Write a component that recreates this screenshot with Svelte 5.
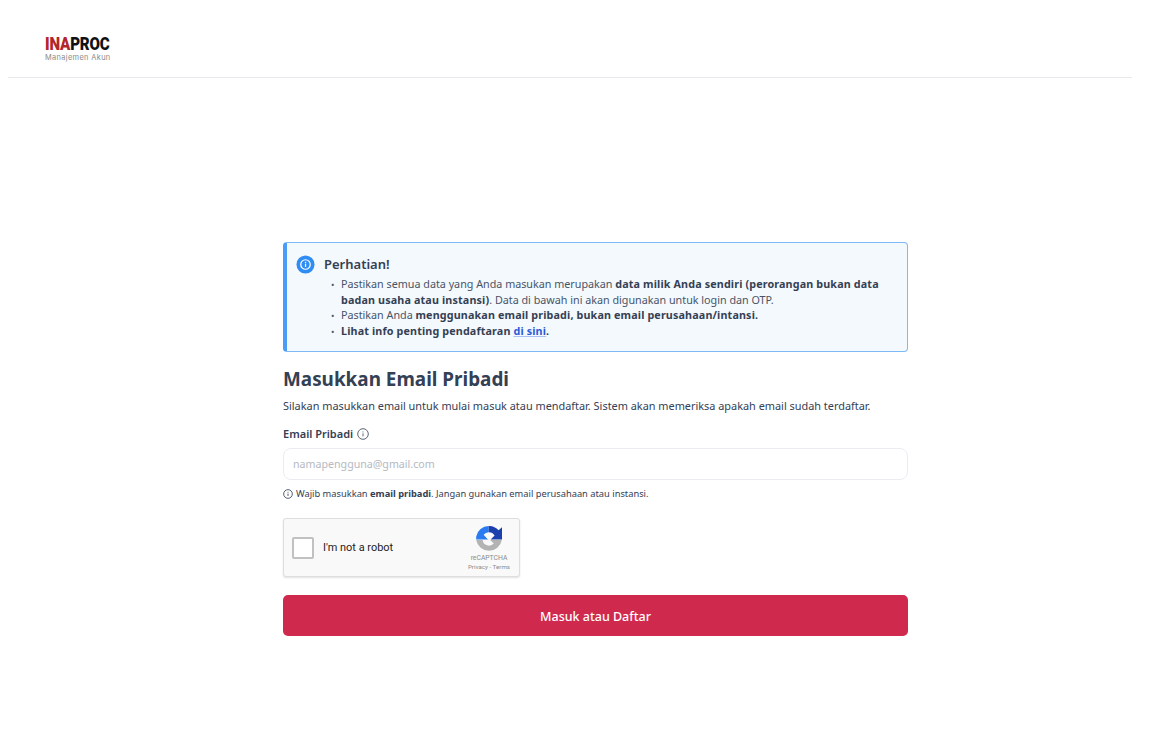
<script>
  let email = $state('');
</script>

<div class="page">
  <header class="top">
    <div class="logo">
      <div class="brand"><span class="ina">INA</span><span class="proc">PROC</span></div>
      <div class="sub">Manajemen Akun</div>
    </div>
  </header>

  <main class="content">
    <section class="alert">
      <div class="alert-head">
        <svg class="alert-icon" viewBox="0 0 20 20" width="19" height="19" aria-hidden="true">
          <circle cx="10" cy="10" r="9.5" fill="#2f8cf3" />
          <circle cx="10" cy="10" r="5" fill="none" stroke="#fff" stroke-width="1.3" />
          <rect x="9.4" y="9.2" width="1.3" height="3.4" fill="#fff" />
          <rect x="9.4" y="7.2" width="1.3" height="1.3" fill="#fff" />
        </svg>
        <span class="alert-title">Perhatian!</span>
      </div>
      <ul>
        <li>Pastikan semua data yang Anda masukan merupakan <b>data milik Anda sendiri (perorangan bukan data badan usaha atau instansi)</b>. Data di bawah ini akan digunakan untuk login dan OTP.</li>
        <li>Pastikan Anda <b>menggunakan email pribadi, bukan email perusahaan/intansi.</b></li>
        <li><b>Lihat info penting pendaftaran <a href="#top">di sini</a>.</b></li>
      </ul>
    </section>

    <h1>Masukkan Email Pribadi</h1>
    <p class="lead">Silakan masukkan email untuk mulai masuk atau mendaftar. Sistem akan memeriksa apakah email sudah terdaftar.</p>

    <label class="field-label" for="email">
      Email Pribadi
      <svg viewBox="0 0 12 12" width="12" height="12" aria-hidden="true">
        <circle cx="6" cy="6" r="5.3" fill="none" stroke="#475467" stroke-width="0.9" />
        <path d="M6 5.4v3M6 3.5v.9" stroke="#475467" stroke-width="0.9" fill="none" />
      </svg>
    </label>
    <input id="email" class="input" type="email" placeholder="namapengguna@gmail.com" bind:value={email} />
    <p class="hint">
      <svg viewBox="0 0 12 12" width="10" height="10" aria-hidden="true">
        <circle cx="6" cy="6" r="5.2" fill="none" stroke="#344054" stroke-width="1" />
        <path d="M6 5.4v3M6 3.4v1" stroke="#344054" stroke-width="1" fill="none" />
      </svg>
      <span>Wajib masukkan <b>email pribadi</b>. Jangan gunakan email perusahaan atau instansi.</span>
    </p>

    <div class="captcha">
      <span class="check"></span>
      <span class="robot">I'm not a robot</span>
      <div class="rc">
        <svg viewBox="0 0 26 26" width="26" height="26" aria-hidden="true">
          <path d="M12.6 13.4 H0.2 V13 L0.2 10.5 A13 13 0 0 1 12.6 0 V6.2 A6.5 6.5 0 0 0 7.6 8.8 L11.4 13 Z" fill="#2a7af0" />
          <path d="M12.6 0 A13 13 0 0 1 22.6 4.3 L26 1.2 V13.4 H14.6 L18.6 9.6 A6.5 6.5 0 0 0 12.6 6.2 Z" fill="#1c3fae" />
          <path d="M0.2 14 H6.6 A6.5 6.5 0 0 0 17.8 17.6 L14.2 14 H25.8 A13 13 0 0 1 0.2 14 Z" fill="#b3b3b3" />
        </svg>
        <div class="rc-name">reCAPTCHA</div>
        <div class="rc-links">Privacy - Terms</div>
      </div>
    </div>

    <button class="submit" type="button">Masuk atau Daftar</button>
  </main>
</div>

<style>
  :global(body) {
    margin: 0;
    background: #fff;
    font-family: "Noto Sans", "Open Sans", sans-serif;
    color: #344054;
  }
  .page {
    min-height: 748px;
    box-sizing: border-box;
  }
  .top {
    margin: 0 44px 0 8px;
    height: 78px;
    box-sizing: border-box;
    border-bottom: 1px solid #e8eaed;
    padding: 36px 0 0 37px;
  }
  .logo {
    width: 66px;
  }
  .brand {
    font-family: "Roboto", sans-serif;
    font-weight: 900;
    font-size: 17.5px;
    line-height: 16px;
    letter-spacing: -0.2px;
    display: flex;
    white-space: nowrap;
    transform: scaleX(0.865);
    transform-origin: left;
  }
  .ina { color: #b3252b; }
  .proc { color: #111; }
  .sub {
    font-family: "Inter", sans-serif;
    font-size: 7.4px;
    line-height: 8px;
    margin-top: 1.5px;
    color: #8a8a8a;
    white-space: nowrap;
    letter-spacing: 0.36px;
  }
  .content {
    width: 625px;
    margin: 164px 0 0 283px;
  }
  .alert {
    box-sizing: border-box;
    height: 110px;
    background: #f4f9fe;
    border: 1px solid #7db8f7;
    border-left: 4px solid #4a9cf6;
    border-radius: 4px;
    padding: 11px 12px 0 9px;
  }
  .alert-head {
    display: flex;
    align-items: center;
    gap: 9px;
    height: 20px;
  }
  .alert-title {
    font-size: 13px;
    font-weight: 600;
    color: #344054;
  }
  ul {
    list-style: none;
    margin: 3px 0 0;
    padding: 0 0 0 45px;
    font-size: 10.75px;
    line-height: 15.7px;
    color: #475467;
  }
  li {
    position: relative;
  }
  li::before {
    content: "•";
    position: absolute;
    left: -10px;
    font-size: 9px;
  }
  li b {
    letter-spacing: 0.14px;
  }
  b {
    font-weight: 700;
    color: #344054;
  }
  a {
    color: #2a5bd7;
    text-decoration: underline;
    text-decoration-color: #a9c0f0;
  }
  h1 {
    margin: 14px 0 0;
    font-size: 18.9px;
    line-height: 26px;
    font-weight: 700;
    color: #344054;
  }
  .lead {
    margin: 6px 0 0;
    font-size: 10.9px;
    line-height: 16px;
    color: #344054;
  }
  .field-label {
    display: flex;
    align-items: center;
    gap: 4px;
    margin-top: 12px;
    font-size: 11px;
    line-height: 16px;
    font-weight: 600;
    color: #344054;
  }
  .input {
    display: block;
    box-sizing: border-box;
    width: 100%;
    height: 32px;
    margin-top: 6px;
    padding: 0 9px;
    border: 1px solid #eaecf0;
    border-radius: 8px;
    background: #fff;
    font-family: inherit;
    font-size: 10.65px;
    outline: none;
  }
  .input::placeholder {
    color: #b4b9c2;
  }
  .hint {
    display: flex;
    align-items: center;
    gap: 3px;
    margin: 7px 0 0;
    font-size: 9.3px;
    line-height: 14px;
    color: #344054;
  }
  .captcha {
    box-sizing: border-box;
    width: 237px;
    height: 59px;
    margin-top: 17px;
    padding: 0 7px 0 8px;
    display: flex;
    align-items: center;
    background: #f9f9f9;
    border: 1px solid #dedede;
    border-radius: 3px;
    box-shadow: 0 1px 2px rgba(0, 0, 0, 0.12);
    font-family: "Roboto", sans-serif;
  }
  .check {
    box-sizing: border-box;
    width: 22px;
    height: 22px;
    background: #fff;
    border: 2px solid #c1c1c1;
    border-radius: 2px;
  }
  .robot {
    margin-left: 9px;
    font-size: 10.95px;
    color: #222;
  }
  .rc {
    margin-left: auto;
    width: 46px;
    display: flex;
    flex-direction: column;
    align-items: center;
    color: #8b8b8b;
    margin-top: 2px;
  }
  .rc-name {
    font-size: 6.8px;
    line-height: 9px;
    margin-top: 2px;
  }
  .rc-links {
    font-size: 6.2px;
    line-height: 9px;
    white-space: nowrap;
  }
  .submit {
    display: block;
    width: 100%;
    height: 41px;
    margin-top: 18px;
    padding: 1px 0 0;
    border: 0;
    border-radius: 5px;
    background: #d0294e;
    color: #fff;
    font-family: inherit;
    font-size: 12.5px;
    font-weight: 500;
  }
</style>
